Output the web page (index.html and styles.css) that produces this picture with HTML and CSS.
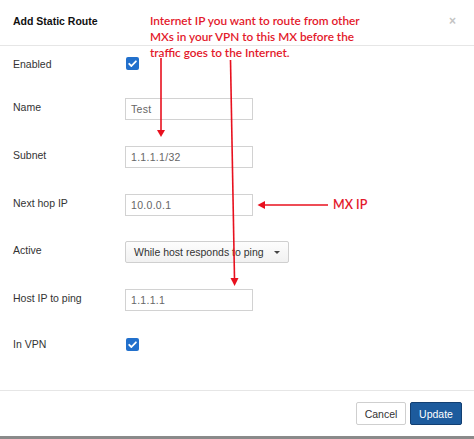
FILE: index.html
```html
<!DOCTYPE html>
<html>
<head>
<meta charset="utf-8">
<link rel="stylesheet" href="styles.css">
</head>
<body>
<div class="modal">
  <div class="header">
    <div class="title">Add Static Route</div>
    <div class="close">&times;</div>
  </div>
  <div class="body">
    <div class="row row-check">
      <div class="label">Enabled</div>
      <div class="checkbox"><svg viewBox="0 0 13 13" width="13" height="13"><path d="M3.2 6.8 L5.4 9 L9.9 4.3" fill="none" stroke="#fff" stroke-width="1.8" stroke-linecap="round" stroke-linejoin="round"/></svg></div>
    </div>
    <div class="row">
      <div class="label">Name</div>
      <div class="input">Test</div>
    </div>
    <div class="row">
      <div class="label">Subnet</div>
      <div class="input">1.1.1.1/32</div>
    </div>
    <div class="row row-short">
      <div class="label">Next hop IP</div>
      <div class="input">10.0.0.1</div>
    </div>
    <div class="row">
      <div class="label">Active</div>
      <div class="select">While host responds to ping <span class="caret"></span></div>
    </div>
    <div class="row">
      <div class="label">Host IP to ping</div>
      <div class="input">1.1.1.1</div>
    </div>
    <div class="row row-vpn">
      <div class="label">In VPN</div>
      <div class="checkbox"><svg viewBox="0 0 13 13" width="13" height="13"><path d="M3.2 6.8 L5.4 9 L9.9 4.3" fill="none" stroke="#fff" stroke-width="1.8" stroke-linecap="round" stroke-linejoin="round"/></svg></div>
    </div>
  </div>
  <div class="footer">
    <button class="btn btn-cancel">Cancel</button>
    <button class="btn btn-primary">Update</button>
  </div>

  <div class="note note-main">Internet IP you want to route from other<br>MXs in your VPN to this MX before the<br>traffic goes to the Internet.</div>
  <div class="note note-mx">MX IP</div>
  <svg class="arrows" width="474" height="439" viewBox="0 0 474 439">
    <g stroke="#e8101e" stroke-width="1.6" fill="none">
      <line x1="161" y1="58" x2="161" y2="131"/>
      <line x1="230.5" y1="60" x2="234.5" y2="279"/>
      <line x1="328" y1="205" x2="264" y2="205"/>
    </g>
    <g fill="#e8101e">
      <polygon points="157,130 165,130 161,137"/>
      <polygon points="230.5,278 238.5,278 234.6,286"/>
      <polygon points="265,201 265,209 257.5,205"/>
    </g>
  </svg>
</div>
</body>
</html>
```
FILE: styles.css
```css
html, body {
  margin: 0;
  padding: 0;
  background: #fff;
}
.modal {
  position: relative;
  width: 474px;
  height: 436px;
  border-bottom: 3px solid #8a8a8a;
  background: #fff;
  font-family: "Liberation Sans", Arial, sans-serif;
  color: #333;
  overflow: hidden;
}
.header {
  height: 45px;
  border-bottom: 1px solid #e6e6e6;
  display: flex;
  align-items: flex-start;
  justify-content: space-between;
  padding: 0 18px 0 13px;
}
.title {
  margin-top: 14px;
  font-size: 10.5px;
  font-weight: bold;
  color: #111;
  line-height: 14px;
}
.close {
  margin-top: 14px;
  font-size: 12px;
  font-weight: bold;
  color: #c4c4c4;
  line-height: 14px;
}
.body {
  padding: 0 0 0 13px;
}
.row {
  display: flex;
  align-items: flex-start;
  height: 48px;
}
.row-short {
  height: 47px;
}
.row-check {
  height: 52px;
}
.row-check .checkbox,
.row-check .label {
  margin-top: 11px;
}
.row-vpn {
  height: 53px;
}
.row-vpn .checkbox {
  margin-top: 1px;
}
.row-vpn .label {
  padding-top: 0;
}
.label {
  width: 112px;
  font-size: 10.5px;
  line-height: 14px;
  padding-top: 2px;
  color: #333;
}
.row-check .label {
  padding-top: 0;
}
.checkbox {
  width: 13px;
  height: 13px;
  border-radius: 2px;
  background: #2270cc;
  margin-left: 1px;
}
.checkbox svg {
  display: block;
}
.input {
  box-sizing: border-box;
  width: 128px;
  height: 22px;
  border: 1px solid #d2d2d2;
  padding: 0 5px;
  font-size: 10.5px;
  line-height: 20px;
  color: #666;
  letter-spacing: 0.3px;
}
.select {
  box-sizing: border-box;
  width: 164px;
  height: 22px;
  border: 1px solid #cfcfcf;
  border-radius: 2px;
  background: linear-gradient(#fdfdfd, #f1f1f1);
  padding: 0 8px;
  font-size: 10.5px;
  line-height: 20px;
  color: #333;
  display: flex;
  align-items: center;
  justify-content: space-between;
}
.caret {
  width: 0;
  height: 0;
  border-left: 3px solid transparent;
  border-right: 3px solid transparent;
  border-top: 3px solid #444;
}
.footer {
  border-top: 1px solid #e6e6e6;
  display: flex;
  justify-content: flex-end;
  gap: 4px;
  padding: 11px 12px 0 0;
}
.btn {
  box-sizing: border-box;
  height: 23px;
  font-family: "Liberation Sans", Arial, sans-serif;
  font-size: 10.5px;
  padding: 0;
  border-radius: 2px;
}
.btn-cancel {
  width: 50px;
  background: #fff;
  border: 1px solid #cfcfcf;
  color: #333;
}
.btn-primary {
  width: 52px;
  background: #1d5b9d;
  border: 1px solid #123f72;
  color: #fff;
}
.note {
  position: absolute;
  font-family: Lato, "Open Sans", sans-serif;
  color: #e3192b;
  font-size: 11.8px;
  line-height: 16px;
  font-weight: 600;
}
.note-main {
  left: 150px;
  top: 13px;
}
.note-mx {
  left: 333px;
  top: 197px;
  font-size: 12.5px;
}
.arrows {
  position: absolute;
  left: 0;
  top: 0;
  pointer-events: none;
}
```
